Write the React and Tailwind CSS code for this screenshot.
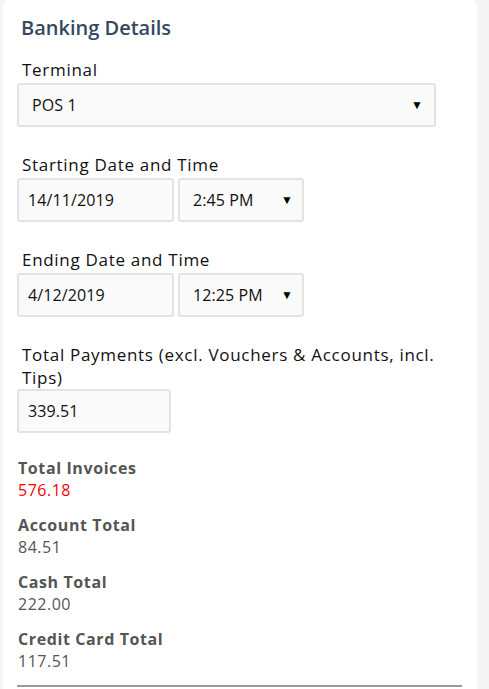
import React from 'react'

// ── Small pieces ───────────────────────────────────────────────────────────────
const Label = ({ children, className = 'mb-[2px]' }) => (
    <div className={`pl-[5px] pr-3 text-[17px] leading-[23px] tracking-[0.7px] text-[#111] ${className}`}>{children}</div>
)

const Box = ({ className = '', children, arrow }) => (
    <div className={`h-[44px] flex items-center justify-between bg-[#fafafa] border-2 border-[#e3e3e3] rounded-[3px] text-[16px] tracking-[0.1px] text-[#111] ${className}`}>
        <span>{children}</span>
        {arrow && <span className="text-[12px] text-black">▼</span>}
    </div>
)

const Stat = ({ label, value, red }) => (
    <div className="mb-[13px]">
        <div className="text-[16px] leading-[22px] font-bold text-[#555] tracking-[0.6px]">{label}</div>
        <div className={`text-[16px] leading-[22px] tracking-[0.5px] ${red ? 'text-[#ff0000]' : 'text-[#555]'}`}>{value}</div>
    </div>
)

// ── Page ───────────────────────────────────────────────────────────────────────
export default function App() {
    return (
        <div className="w-[489px] h-[689px] bg-[#f5f5f5] pl-[3px] overflow-hidden" style={{ fontFamily: '"Open Sans", sans-serif' }}>
            <div className="w-[474px] h-[700px] bg-white rounded-[6px] pl-[14px] pr-[14px] pt-[13px]">
                <h2 className="pl-[4px] text-[20px] leading-[30px] text-[#34495e] font-semibold mb-[15px]">Banking Details</h2>

                <Label>Terminal</Label>
                <Box className="w-[419px] pl-[13px] pr-[11px]" arrow>POS 1</Box>

                <div className="mt-[26px]">
                    <Label>Starting Date and Time</Label>
                    <div className="flex gap-[4px]">
                        <Box className="w-[157px] pl-[9px]">14/11/2019</Box>
                        <Box className="w-[126px] pl-[13px] pr-[9px]" arrow>2:45 PM</Box>
                    </div>
                </div>

                <div className="mt-[26px]">
                    <Label>Ending Date and Time</Label>
                    <div className="flex gap-[4px]">
                        <Box className="w-[157px] pl-[9px]">4/12/2019</Box>
                        <Box className="w-[126px] pl-[13px] pr-[9px]" arrow>12:25 PM</Box>
                    </div>
                </div>

                <div className="mt-[26px]">
                    <Label className="mb-0">Total Payments (excl. Vouchers &amp; Accounts, incl. Tips)</Label>
                    <Box className="w-[154px] h-[41px] pl-[9px]">339.51</Box>
                </div>

                <div className="mt-[24px] pl-[1px]">
                    <Stat label="Total Invoices" value="576.18" red />
                    <Stat label="Account Total" value="84.51" />
                    <Stat label="Cash Total" value="222.00" />
                    <Stat label="Credit Card Total" value="117.51" />
                </div>

                <div className="mt-[2px] w-[445px] border-t-2 border-[#9a9a9a]" />
            </div>
        </div>
    )
}
